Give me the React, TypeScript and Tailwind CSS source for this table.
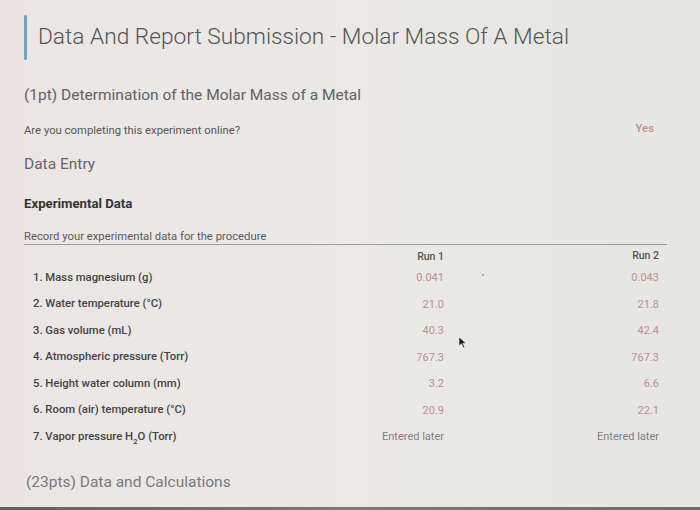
import React from 'react';

type Row = { label: React.ReactNode; run1: string; run2: string; later?: boolean };

const rows: Row[] = [
  { label: '1. Mass magnesium (g)', run1: '0.041', run2: '0.043' },
  { label: '2. Water temperature (°C)', run1: '21.0', run2: '21.8' },
  { label: '3. Gas volume (mL)', run1: '40.3', run2: '42.4' },
  { label: '4. Atmospheric pressure (Torr)', run1: '767.3', run2: '767.3' },
  { label: '5. Height water column (mm)', run1: '3.2', run2: '6.6' },
  { label: '6. Room (air) temperature (°C)', run1: '20.9', run2: '22.1' },
  {
    label: (
      <>
        7. Vapor pressure H<sub className="text-[8px] align-[-2px]">2</sub>O (Torr)
      </>
    ),
    run1: 'Entered later',
    run2: 'Entered later',
    later: true,
  },
];

function Cursor() {
  return (
    <svg className="absolute left-[458px] top-[336px]" width="9" height="13" viewBox="0 0 9 13">
      <path d="M1 1 L1 10 L3.4 7.8 L5.2 11.8 L6.6 11.2 L4.9 7.3 L8 7.2 Z" fill="#1d1d1d" stroke="#f2f2f2" strokeWidth="0.6" />
    </svg>
  );
}

export default function App() {
  return (
    <div className="relative h-[510px] w-[700px] overflow-hidden bg-gradient-to-r from-[#ebe6e5] via-[#eae9e5] to-[#e6e6e3] font-['Roboto',sans-serif] flex flex-col">
      <div className="flex-1 px-6">
        <div className="flex items-center mt-[15px] h-[45px]">
          <div className="w-[3px] h-full bg-[#6ea3b6] rounded-sm" />
          <h1 className="ml-[11px] text-[22.7px] font-light text-[#545454] leading-none">
            Data And Report Submission - Molar Mass Of A Metal
          </h1>
        </div>

        <h2 className="mt-[25px] text-[15.5px] text-[#626262] leading-[20px]">
          (1pt) Determination of the Molar Mass of a Metal
        </h2>

        <div className="mt-[19px] flex justify-between text-[11.3px] leading-[14px] pr-[22px]">
          <span className="text-[#565656]">Are you completing this experiment online?</span>
          <span className="text-[#c48e8a] font-medium -mt-[2px]">Yes</span>
        </div>

        <h3 className="mt-[16px] text-[15.5px] text-[#666] leading-[20px]">Data Entry</h3>

        <h4 className="mt-[22px] text-[13.2px] font-bold text-[#353535] leading-[16px]">Experimental Data</h4>

        <p className="mt-[18px] text-[11.3px] text-[#5a5a5a] leading-[14px]">
          Record your experimental data for the procedure
        </p>

        <div className="w-[643px] border-t border-[#9c9c9c]">
          <div className="grid grid-cols-[340px_80px_1fr] pr-2 mt-[4px] h-[16px] items-center text-[10.5px] font-medium text-[#555]">
            <span />
            <span className="text-right">Run 1</span>
            <span className="text-right -mt-[3px]">Run 2</span>
          </div>
          {rows.map((r, i) => (
            <div key={i} className="grid grid-cols-[340px_80px_1fr] pr-2 h-[26.5px] items-center text-[11px]">
              <span className="pl-[9px] text-[11.3px] font-medium text-[#444]">{r.label}</span>
              <span className={r.later ? 'text-right text-[#808080]' : 'text-right text-[#c0908c]'}>{r.run1}</span>
              <span className={r.later ? 'text-right text-[#808080]' : 'text-right text-[#c0908c]'}>{r.run2}</span>
            </div>
          ))}
        </div>

        <h2 className="mt-[21px] ml-[2px] text-[15.5px] text-[#7a7a7a] leading-[20px]">(23pts) Data and Calculations</h2>
      </div>

      <div className="h-[3px] bg-gradient-to-r from-[#5f6165] via-[#787a7e] to-[#6a6c70]" />

      <div className="absolute left-[482px] top-[274px] w-[2px] h-[2px] rounded-full bg-[#9a9a9a]" />
      <Cursor />
    </div>
  );
}
